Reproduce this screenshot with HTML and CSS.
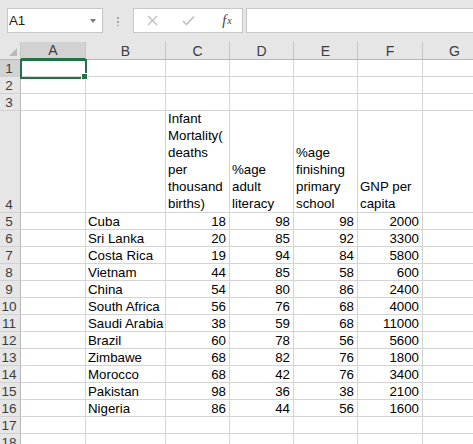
FILE: index.html
```html
<!DOCTYPE html>
<html lang="en">
<head>
  <meta charset="UTF-8" />
  <title>Book1 - Excel</title>
  <link rel="stylesheet" href="styles.css">
</head>
<body>

  <div class="formula-bar">
    <div class="name-box">A1<span class="caret"></span></div>
    <div class="grip"></div>
    <div class="fx-box">
      <span class="fx-btn">
        <svg width="11" height="11" viewBox="0 0 11 11"><path d="M1 1L10 10M10 1L1 10" stroke="#bdbdbd" stroke-width="1.3" fill="none"/></svg>
      </span>
      <span class="fx-btn">
        <svg width="13" height="11" viewBox="0 0 13 11"><path d="M1 6L4.5 9.5L12 1.5" stroke="#bdbdbd" stroke-width="1.5" fill="none"/></svg>
      </span>
      <span class="fx-btn fx"><i>f</i><sub>x</sub></span>
    </div>
    <div class="formula-input"></div>
  </div>

  <div class="sheet">
    <!-- column headers -->
    <div class="corner"><span class="tri"></span></div>
    <div class="hd sel-col">A</div>
    <div class="hd">B</div>
    <div class="hd">C</div>
    <div class="hd">D</div>
    <div class="hd">E</div>
    <div class="hd">F</div>
    <div class="hd">G</div>

    <div class="rh sel-row">1</div><div class="c"></div><div class="c"></div><div class="c"></div><div class="c"></div><div class="c"></div><div class="c"></div><div class="c"></div>
    <div class="rh">2</div><div class="c"></div><div class="c"></div><div class="c"></div><div class="c"></div><div class="c"></div><div class="c"></div><div class="c"></div>
    <div class="rh">3</div><div class="c"></div><div class="c"></div><div class="c"></div><div class="c"></div><div class="c"></div><div class="c"></div><div class="c"></div>

    <div class="rh">4</div>
    <div class="c"></div>
    <div class="c"></div>
    <div class="c"><span class="wrap">Infant<br>Mortality(<br>deaths<br>per<br>thousand<br>births)</span></div>
    <div class="c"><span class="wrap">%age<br>adult<br>literacy</span></div>
    <div class="c"><span class="wrap">%age<br>finishing<br>primary<br>school</span></div>
    <div class="c"><span class="wrap">GNP per<br>capita</span></div>
    <div class="c"></div>

    <div class="rh">5</div><div class="c"></div><div class="c">Cuba</div><div class="c n">18</div><div class="c n">98</div><div class="c n">98</div><div class="c n">2000</div><div class="c"></div>
    <div class="rh">6</div><div class="c"></div><div class="c">Sri Lanka</div><div class="c n">20</div><div class="c n">85</div><div class="c n">92</div><div class="c n">3300</div><div class="c"></div>
    <div class="rh">7</div><div class="c"></div><div class="c">Costa Rica</div><div class="c n">19</div><div class="c n">94</div><div class="c n">84</div><div class="c n">5800</div><div class="c"></div>
    <div class="rh">8</div><div class="c"></div><div class="c">Vietnam</div><div class="c n">44</div><div class="c n">85</div><div class="c n">58</div><div class="c n">600</div><div class="c"></div>
    <div class="rh">9</div><div class="c"></div><div class="c">China</div><div class="c n">54</div><div class="c n">80</div><div class="c n">86</div><div class="c n">2400</div><div class="c"></div>
    <div class="rh">10</div><div class="c"></div><div class="c">South Africa</div><div class="c n">56</div><div class="c n">76</div><div class="c n">68</div><div class="c n">4000</div><div class="c"></div>
    <div class="rh">11</div><div class="c"></div><div class="c">Saudi Arabia</div><div class="c n">38</div><div class="c n">59</div><div class="c n">68</div><div class="c n">11000</div><div class="c"></div>
    <div class="rh">12</div><div class="c"></div><div class="c">Brazil</div><div class="c n">60</div><div class="c n">78</div><div class="c n">56</div><div class="c n">5600</div><div class="c"></div>
    <div class="rh">13</div><div class="c"></div><div class="c">Zimbawe</div><div class="c n">68</div><div class="c n">82</div><div class="c n">76</div><div class="c n">1800</div><div class="c"></div>
    <div class="rh">14</div><div class="c"></div><div class="c">Morocco</div><div class="c n">68</div><div class="c n">42</div><div class="c n">76</div><div class="c n">3400</div><div class="c"></div>
    <div class="rh">15</div><div class="c"></div><div class="c">Pakistan</div><div class="c n">98</div><div class="c n">36</div><div class="c n">38</div><div class="c n">2100</div><div class="c"></div>
    <div class="rh">16</div><div class="c"></div><div class="c">Nigeria</div><div class="c n">86</div><div class="c n">44</div><div class="c n">56</div><div class="c n">1600</div><div class="c"></div>

    <div class="rh">17</div><div class="c"></div><div class="c"></div><div class="c"></div><div class="c"></div><div class="c"></div><div class="c"></div><div class="c"></div>
    <div class="rh">18</div><div class="c"></div><div class="c"></div><div class="c"></div><div class="c"></div><div class="c"></div><div class="c"></div><div class="c"></div>

    <!-- active cell A1 -->
    <div class="selection"><span class="handle"></span></div>
  </div>

</body>
</html>
```

FILE: styles.css
```css
* {
  box-sizing: border-box;
  margin: 0;
  padding: 0;
}

body {
  font-family: "Liberation Sans", Arial, sans-serif;
  font-size: 13.3px;
  color: #000;
  background: #e6e6e6;
  width: 473px;
  height: 444px;
  overflow: hidden;
}

/* ---- formula bar ---- */
.formula-bar {
  display: flex;
  align-items: flex-start;
  height: 42px;
  padding: 8px 0 0 7px;
}

.name-box {
  width: 96px;
  height: 25px;
  background: #fff;
  border: 1px solid #c6c6c6;
  display: flex;
  align-items: center;
  justify-content: space-between;
  padding: 0 6px 0 1px;
  color: #222;
}

.caret {
  width: 0;
  height: 0;
  border-left: 3.5px solid transparent;
  border-right: 3.5px solid transparent;
  border-top: 4px solid #7a7a7a;
}

.grip {
  width: 30px;
  height: 25px;
  display: flex;
  align-items: center;
  justify-content: center;
}

.grip::before {
  content: "";
  width: 2px;
  height: 10px;
  background: radial-gradient(circle, #a6a6a6 0.8px, transparent 1px) 0 0 / 2px 4px;
}

.fx-box {
  width: 110px;
  height: 25px;
  background: #fff;
  border: 1px solid #c6c6c6;
  display: flex;
}

.fx-btn {
  width: 36px;
  height: 23px;
  display: flex;
  align-items: center;
  justify-content: center;
}

.fx {
  padding-left: 6px;
  font-family: "Liberation Serif", serif;
  color: #3a3a3a;
  font-size: 14px;
  font-style: italic;
}

.fx sub {
  font-size: 10px;
  vertical-align: -2px;
  margin-left: 1px;
}

.formula-input {
  flex: 1;
  height: 25px;
  margin-left: 3px;
  margin-right: -4px;
  background: #fff;
  border: 1px solid #c6c6c6;
}

/* ---- grid ---- */
.sheet {
  position: relative;
  display: grid;
  grid-template-columns: 21px 65px 80px 64px 64px 64px 65px 64px;
  grid-template-rows: 18px 17px 17px 17px 102px repeat(14, 17px);
  background: #fff;
}

.corner {
  background: #e6e6e6;
  border-right: 1px solid #c6c6c6;
  border-bottom: 1px solid #b8b8b8;
  display: flex;
  justify-content: flex-end;
  align-items: flex-end;
  padding: 0 3px 3px 0;
}

.tri {
  width: 0;
  height: 0;
  border-left: 8px solid transparent;
  border-bottom: 8px solid #b9b9b9;
}

.hd {
  background: #e6e6e6;
  border-right: 1px solid #c6c6c6;
  border-bottom: 1px solid #b8b8b8;
  display: flex;
  align-items: flex-end;
  justify-content: center;
  font-size: 14px;
  line-height: 15px;
  color: #3c3c3c;
}

.hd.sel-col {
  background: #d2d2d2;
  border-bottom: 2px solid #217346;
}

.rh {
  background: #e6e6e6;
  border-right: 1px solid #b8b8b8;
  border-bottom: 1px solid #d0d0d0;
  display: flex;
  align-items: flex-end;
  justify-content: center;
  padding-right: 2px;
  font-size: 13.5px;
  line-height: 15px;
  color: #3c3c3c;
}

.rh.sel-row {
  background: #d2d2d2;
}

.c {
  border-right: 1px solid #d4d4d4;
  border-bottom: 1px solid #d4d4d4;
  display: flex;
  align-items: flex-end;
  padding: 0 3px 0 2px;
  line-height: 15px;
  white-space: nowrap;
}

.c.n {
  justify-content: flex-end;
}

.wrap {
  line-height: 17px;
}

.selection {
  position: absolute;
  left: 20px;
  top: 17px;
  width: 67px;
  height: 20px;
  border: 2px solid #217346;
}

.handle {
  position: absolute;
  right: -3px;
  bottom: -3px;
  width: 7px;
  height: 7px;
  background: #217346;
  border: 1px solid #fff;
}
```
